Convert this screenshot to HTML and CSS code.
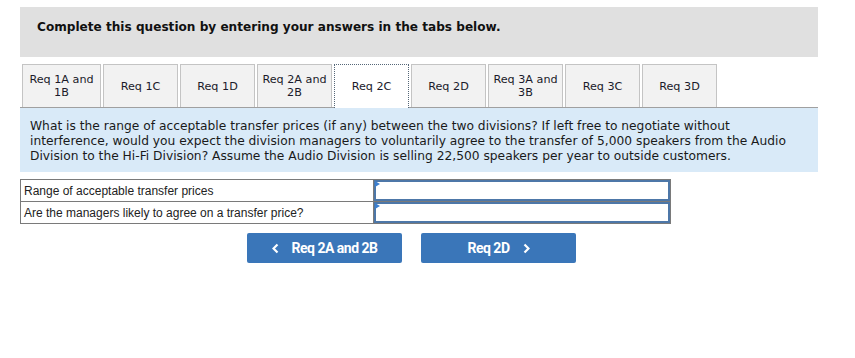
FILE: index.html
```html
<!DOCTYPE html>
<html lang="en">
<head>
  <meta charset="UTF-8" />
  <title>Req 2C</title>
  <link rel="stylesheet" href="styles.css">
</head>
<body>

  <div class="pagina">

    <!-- Instrucciones -->
    <div class="instrucciones">
      Complete this question by entering your answers in the tabs below.
    </div>

    <!-- Pestañas -->
    <div class="pestanas">
      <div class="pestana ancha">Req 1A and<br>1B</div>
      <div class="pestana">Req 1C</div>
      <div class="pestana">Req 1D</div>
      <div class="pestana">Req 2A and<br>2B</div>
      <div class="pestana activa">Req 2C</div>
      <div class="pestana">Req 2D</div>
      <div class="pestana">Req 3A and<br>3B</div>
      <div class="pestana">Req 3C</div>
      <div class="pestana">Req 3D</div>
    </div>

    <!-- Pregunta -->
    <div class="pregunta">
      What is the range of acceptable transfer prices (if any) between the two divisions? If left free to negotiate without<br>
      interference, would you expect the division managers to voluntarily agree to the transfer of 5,000 speakers from the Audio<br>
      Division to the Hi-Fi Division? Assume the Audio Division is selling 22,500 speakers per year to outside customers.
    </div>

    <!-- Respuestas -->
    <table class="respuestas">
      <tr>
        <td class="etiqueta">Range of acceptable transfer prices</td>
        <td class="entrada"><span class="marca"></span></td>
      </tr>
      <tr>
        <td class="etiqueta">Are the managers likely to agree on a transfer price?</td>
        <td class="entrada"><span class="marca"></span></td>
      </tr>
    </table>

    <!-- Navegación -->
    <div class="navegacion">
      <a href="#" class="boton">
        <svg class="flecha" width="7" height="11" viewBox="0 0 7 11"><polyline points="5.5,1.5 1.5,5.5 5.5,9.5" fill="none" stroke="white" stroke-width="2.2"/></svg>
        Req 2A and 2B
      </a>
      <a href="#" class="boton">
        Req 2D
        <svg class="flecha" width="7" height="11" viewBox="0 0 7 11"><polyline points="1.5,1.5 5.5,5.5 1.5,9.5" fill="none" stroke="white" stroke-width="2.2"/></svg>
      </a>
    </div>

  </div>

</body>
</html>
```

FILE: styles.css
```css
body {
  margin: 0;
  padding: 0;
  background: white;
  font-family: "DejaVu Sans", Verdana, sans-serif;
  color: #1a1a1a;
}

.pagina {
  width: 798px;
  padding: 7px 0 0 20px;
}

.instrucciones {
  background-color: #e0e0e0;
  height: 50px;
  box-sizing: border-box;
  padding: 13px 0 0 17px;
  font-size: 12.1px;
  font-weight: bold;
  color: #111;
}

.pestanas {
  display: flex;
  gap: 2px;
  margin-top: 7px;
  padding-left: 2px;
  border-bottom: 1px solid #a0a0a0;
}

.pestana {
  width: 75px;
  height: 43px;
  box-sizing: border-box;
  background-color: #f2f2f2;
  border: 1px solid #c4c4c4;
  border-bottom: none;
  display: flex;
  align-items: center;
  justify-content: center;
  text-align: center;
  font-size: 11.2px;
  line-height: 13px;
  color: #1a1a2a;
}

.pestana.ancha {
  width: 79px;
}

.pestana.activa {
  background-color: white;
  border: 1px dotted #556677;
  border-bottom: none;
  height: 44px;
  margin-bottom: -1px;
}

.pregunta {
  background-color: #d9eaf8;
  padding: 11px 10px 8px 10px;
  font-size: 12.25px;
  line-height: 15px;
  white-space: nowrap;
  color: #1a1a1a;
}

.respuestas {
  border-collapse: collapse;
  margin-top: 7px;
  font-family: "Liberation Sans", Arial, sans-serif;
  font-size: 12px;
}

.respuestas td {
  border: 1px solid #7a7a7a;
  height: 21px;
  padding: 0;
}

.etiqueta {
  width: 349px;
  padding-left: 3px !important;
  color: #222;
}

.entrada {
  width: 296px;
  position: relative;
  box-shadow: inset 0 0 0 2px #4d77a8;
}

.marca {
  position: absolute;
  top: 1px;
  left: 1px;
  width: 0;
  height: 0;
  border-top: 3px solid transparent;
  border-bottom: 3px solid transparent;
  border-left: 5px solid #3b7fd0;
}

.navegacion {
  display: flex;
  gap: 19px;
  margin: 9px 0 0 227px;
}

.boton {
  width: 155px;
  height: 30px;
  background-color: #3a76b9;
  border-radius: 2px;
  color: white;
  text-decoration: none;
  display: flex;
  align-items: center;
  justify-content: center;
  gap: 13px;
  font-family: Roboto, "Liberation Sans", sans-serif;
  font-weight: bold;
  font-size: 14px;
  letter-spacing: -0.5px;
}
```
